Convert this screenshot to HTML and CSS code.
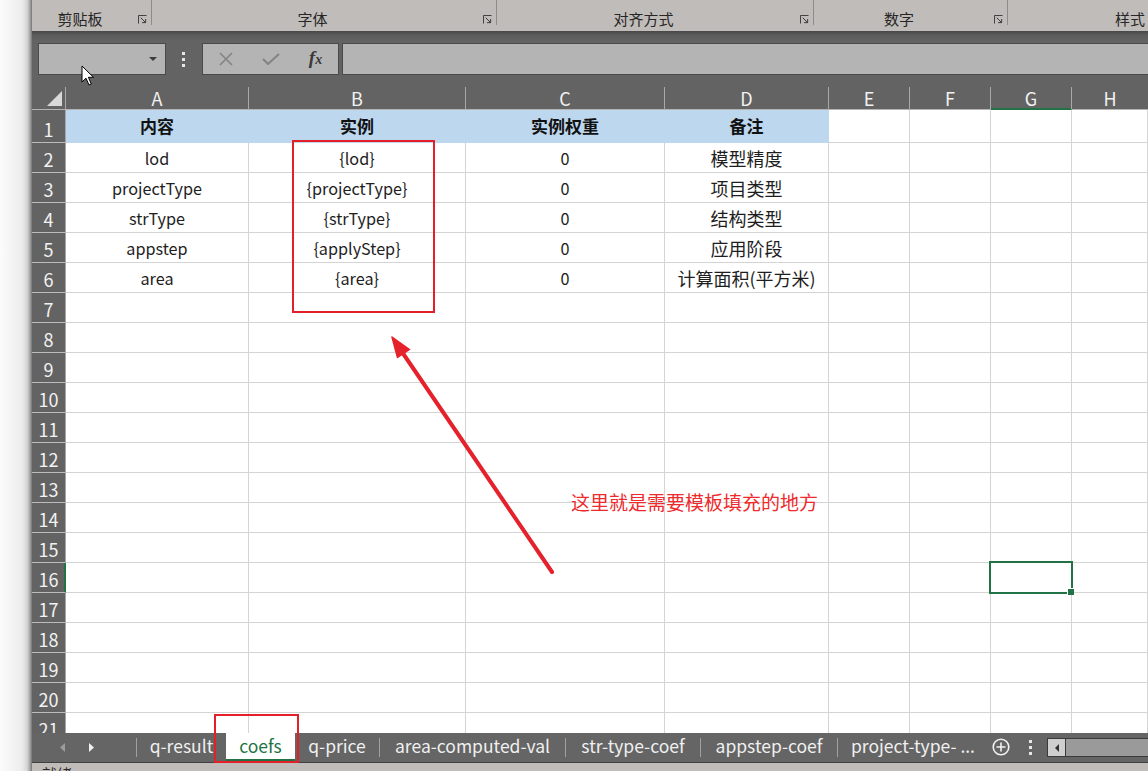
FILE: index.html
```html
<!DOCTYPE html>
<html lang="zh-CN">
<head>
<meta charset="utf-8">
<title>coefs</title>
<link rel="stylesheet" href="styles.css">
</head>
<body>
<div class="edge"></div>
<div class="app">
  <div class="ribbon">
    <div class="rg g1"><span class="rl">剪贴板</span><svg class="launch" viewBox="0 0 10 10"><path d="M0.5 9.5V0.5H9.5M3 3L8.5 8.5M8.5 4.5V8.5H4.5"/></svg></div>
    <i class="rsep"></i>
    <div class="rg g2"><span class="rl">字体</span><svg class="launch" viewBox="0 0 10 10"><path d="M0.5 9.5V0.5H9.5M3 3L8.5 8.5M8.5 4.5V8.5H4.5"/></svg></div>
    <i class="rsep"></i>
    <div class="rg g3"><span class="rl">对齐方式</span><svg class="launch" viewBox="0 0 10 10"><path d="M0.5 9.5V0.5H9.5M3 3L8.5 8.5M8.5 4.5V8.5H4.5"/></svg></div>
    <i class="rsep"></i>
    <div class="rg g4"><span class="rl">数字</span><svg class="launch" viewBox="0 0 10 10"><path d="M0.5 9.5V0.5H9.5M3 3L8.5 8.5M8.5 4.5V8.5H4.5"/></svg></div>
    <i class="rsep"></i>
    <div class="rg g5"><span class="rl rl-end">样式</span></div>
  </div>

  <div class="fbar">
    <div class="namebox"><svg class="dd" viewBox="0 0 8 4"><path d="M0 0H8L4 4Z"/></svg></div>
    <div class="vdots"><i></i><i></i><i></i></div>
    <div class="fxbox">
      <span class="fxslot"><svg class="ico-x" viewBox="0 0 14 14"><path d="M1 1L13 13M13 1L1 13"/></svg></span>
      <span class="fxslot"><svg class="ico-ok" viewBox="0 0 18 12"><path d="M1 6L6 11L17 1"/></svg></span>
      <span class="fxslot"><span class="fx">f<span class="fxs">x</span></span></span>
    </div>
    <div class="finput"></div>
  </div>

  <div class="sheet">
    <div class="r colhead">
      <div class="hc corner"><i class="tri"></i></div>
      <div class="hc">A</div><div class="hc">B</div><div class="hc">C</div><div class="hc">D</div>
      <div class="hc">E</div><div class="hc">F</div><div class="hc hsel">G</div><div class="hc last">H</div>
    </div>
    <div class="r r1">
      <div class="rh">1</div>
      <div class="c fill b">内容</div><div class="c fill b">实例</div><div class="c fill b">实例权重</div><div class="c fill b">备注</div>
      <div class="c"></div><div class="c"></div><div class="c"></div><div class="c"></div>
    </div>
    <div class="r">
      <div class="rh">2</div>
      <div class="c">lod</div><div class="c">{lod}</div><div class="c">0</div><div class="c zh">模型精度</div>
      <div class="c"></div><div class="c"></div><div class="c"></div><div class="c"></div>
    </div>
    <div class="r">
      <div class="rh">3</div>
      <div class="c">projectType</div><div class="c">{projectType}</div><div class="c">0</div><div class="c zh">项目类型</div>
      <div class="c"></div><div class="c"></div><div class="c"></div><div class="c"></div>
    </div>
    <div class="r">
      <div class="rh">4</div>
      <div class="c">strType</div><div class="c">{strType}</div><div class="c">0</div><div class="c zh">结构类型</div>
      <div class="c"></div><div class="c"></div><div class="c"></div><div class="c"></div>
    </div>
    <div class="r">
      <div class="rh">5</div>
      <div class="c">appstep</div><div class="c">{applyStep}</div><div class="c">0</div><div class="c zh">应用阶段</div>
      <div class="c"></div><div class="c"></div><div class="c"></div><div class="c"></div>
    </div>
    <div class="r">
      <div class="rh">6</div>
      <div class="c">area</div><div class="c">{area}</div><div class="c">0</div><div class="c zh">计算面积(平方米)</div>
      <div class="c"></div><div class="c"></div><div class="c"></div><div class="c"></div>
    </div>
    <div class="r"><div class="rh">7</div><div class="c"></div><div class="c"></div><div class="c"></div><div class="c"></div><div class="c"></div><div class="c"></div><div class="c"></div><div class="c"></div></div>
    <div class="r"><div class="rh">8</div><div class="c"></div><div class="c"></div><div class="c"></div><div class="c"></div><div class="c"></div><div class="c"></div><div class="c"></div><div class="c"></div></div>
    <div class="r"><div class="rh">9</div><div class="c"></div><div class="c"></div><div class="c"></div><div class="c"></div><div class="c"></div><div class="c"></div><div class="c"></div><div class="c"></div></div>
    <div class="r"><div class="rh">10</div><div class="c"></div><div class="c"></div><div class="c"></div><div class="c"></div><div class="c"></div><div class="c"></div><div class="c"></div><div class="c"></div></div>
    <div class="r"><div class="rh">11</div><div class="c"></div><div class="c"></div><div class="c"></div><div class="c"></div><div class="c"></div><div class="c"></div><div class="c"></div><div class="c"></div></div>
    <div class="r"><div class="rh">12</div><div class="c"></div><div class="c"></div><div class="c"></div><div class="c"></div><div class="c"></div><div class="c"></div><div class="c"></div><div class="c"></div></div>
    <div class="r"><div class="rh">13</div><div class="c"></div><div class="c"></div><div class="c"></div><div class="c"></div><div class="c"></div><div class="c"></div><div class="c"></div><div class="c"></div></div>
    <div class="r"><div class="rh">14</div><div class="c"></div><div class="c"></div><div class="c"></div><div class="c"></div><div class="c"></div><div class="c"></div><div class="c"></div><div class="c"></div></div>
    <div class="r"><div class="rh">15</div><div class="c"></div><div class="c"></div><div class="c"></div><div class="c"></div><div class="c"></div><div class="c"></div><div class="c"></div><div class="c"></div></div>
    <div class="r"><div class="rh rsel">16</div><div class="c"></div><div class="c"></div><div class="c"></div><div class="c"></div><div class="c"></div><div class="c"></div><div class="c"></div><div class="c"></div></div>
    <div class="r"><div class="rh">17</div><div class="c"></div><div class="c"></div><div class="c"></div><div class="c"></div><div class="c"></div><div class="c"></div><div class="c"></div><div class="c"></div></div>
    <div class="r"><div class="rh">18</div><div class="c"></div><div class="c"></div><div class="c"></div><div class="c"></div><div class="c"></div><div class="c"></div><div class="c"></div><div class="c"></div></div>
    <div class="r"><div class="rh">19</div><div class="c"></div><div class="c"></div><div class="c"></div><div class="c"></div><div class="c"></div><div class="c"></div><div class="c"></div><div class="c"></div></div>
    <div class="r"><div class="rh">20</div><div class="c"></div><div class="c"></div><div class="c"></div><div class="c"></div><div class="c"></div><div class="c"></div><div class="c"></div><div class="c"></div></div>
    <div class="r"><div class="rh">21</div><div class="c"></div><div class="c"></div><div class="c"></div><div class="c"></div><div class="c"></div><div class="c"></div><div class="c"></div><div class="c"></div></div>
  </div>

  <div class="tabbar">
    <div class="tabnav">
      <svg class="nav nav-prev" viewBox="0 0 5 9"><path d="M5 0V9L0 4.5Z"/></svg>
      <svg class="nav nav-next" viewBox="0 0 5 9"><path d="M0 0V9L5 4.5Z"/></svg>
    </div>
    <i class="tsep"></i>
    <div class="tab t1">q-result</div>
    <div class="tab active t2">coefs</div>
    <div class="tab t3">q-price</div>
    <i class="tsep"></i>
    <div class="tab t4">area-computed-val</div>
    <i class="tsep"></i>
    <div class="tab t5">str-type-coef</div>
    <i class="tsep"></i>
    <div class="tab t6">appstep-coef</div>
    <i class="tsep"></i>
    <div class="tab t7">project-type- ...</div>
    <svg class="addsheet" viewBox="0 0 18 18"><circle cx="9" cy="9" r="7.8"/><path d="M9 4.5V13.5M4.5 9H13.5"/></svg>
    <div class="tdots"><i></i><i></i><i></i></div>
    <div class="hscroll"><span class="hs-btn"><svg viewBox="0 0 4 8"><path d="M4 0V8L0 4Z"/></svg></span><span class="hs-thumb"></span></div>
  </div>
  <div class="status">就绪</div>
</div>

<!-- annotations over the screenshot -->
<div class="mark mark-b"></div>
<div class="mark mark-tab"></div>
<div class="selcell"><i class="handle"></i></div>
<div class="note">这里就是需要模板填充的地方</div>
<svg class="arrow" viewBox="0 0 1148 771">
  <line x1="552" y1="572" x2="400" y2="349"/>
  <polygon points="392,337 409.5,349.5 397.5,357.5"/>
</svg>
<svg class="cursor" viewBox="0 0 13 21"><path d="M1 1V17L5 13.2L8 20L10.3 19L7.4 12.3H12.5Z"/></svg>
</body>
</html>
```

FILE: styles.css
```css
* { box-sizing: border-box; margin: 0; padding: 0; }
html, body { width: 1148px; height: 771px; overflow: hidden; }
body {
  position: relative;
  display: flex;
  font-family: "Noto Sans CJK SC", "Noto Sans", sans-serif;
  background: #ffffff;
}
i { display: block; font-style: normal; }

.edge {
  flex: none;
  width: 32px;
  height: 771px;
  background: linear-gradient(to right, #fcfcfc 0, #ececec 22px, #d6d6d6 27px, #a5a5a5 30px, #747474 32px);
}
.app {
  flex: none;
  width: 1116px;
  height: 771px;
  display: flex;
  flex-direction: column;
  background: #636363;
}

/* ribbon group labels */
.ribbon {
  flex: none;
  height: 31px;
  display: flex;
  align-items: flex-start;
  background: #c0bcb9;
}
.rg { display: flex; align-items: flex-start; height: 31px; }
.g1 { width: 119px; }
.g2 { width: 344px; }
.g3 { width: 316px; }
.g4 { width: 193px; }
.g5 { flex: 1; }
.rl {
  flex: 1;
  margin-top: 9px;
  font-size: 15px;
  line-height: 20px;
  color: #262626;
  text-align: center;
}
.rl-end { text-align: right; padding-right: 3px; }
.launch {
  flex: none;
  width: 9px;
  height: 9px;
  margin: 15px 4px 0 10px;
  fill: none;
  stroke: #3a3a3a;
  stroke-width: 1.1;
}
.rsep { width: 1px; height: 25px; background: #8f8b88; }

/* formula bar */
.fbar {
  flex: none;
  height: 44px;
  padding: 12px 0 0 6px;
  display: flex;
  align-items: flex-start;
  background: linear-gradient(#474747 0, #5b5b5b 4px, #636363 10px);
}
.namebox {
  width: 128px;
  height: 32px;
  background: #b4b4b4;
  border: 1px solid #4a4a4a;
  display: flex;
  align-items: center;
  justify-content: flex-end;
  padding-right: 8px;
}
.dd { width: 8px; height: 4px; fill: #3c3c3c; }
.vdots {
  width: 34px;
  height: 32px;
  margin-right: 2px;
  display: flex;
  flex-direction: column;
  align-items: center;
  justify-content: center;
  gap: 3px;
}
.vdots i, .tdots i { width: 3px; height: 3px; background: #e6e6e6; }
.fxbox {
  width: 137px;
  height: 32px;
  margin-right: 3px;
  background: #b4b4b4;
  border: 1px solid #4a4a4a;
  display: flex;
}
.fxslot { width: 45px; height: 30px; display: flex; align-items: center; justify-content: center; }
.ico-x { width: 14px; height: 14px; fill: none; stroke: #838383; stroke-width: 1.6; }
.ico-ok { width: 18px; height: 12px; fill: none; stroke: #838383; stroke-width: 2; }
.fx {
  font-family: "Liberation Serif", serif;
  font-style: italic;
  font-weight: bold;
  font-size: 19px;
  color: #3a3a3a;
  line-height: 20px;
}
.fxs { font-size: 14px; }
.finput {
  flex: 1;
  height: 32px;
  background: #b4b4b4;
  border: 1px solid #4a4a4a;
  border-right: none;
}

/* sheet grid */
.sheet {
  flex: none;
  height: 658px;
  overflow: hidden;
  background: #ffffff;
}
.r {
  display: grid;
  grid-template-columns: 34px 183px 217px 199px 164px 81px 81px 81px 1fr;
}
.colhead { height: 35px; padding-top: 12px; background: #636363; }
.hc {
  height: 23px;
  border-right: 1px solid #a8a8a8;
  border-bottom: 1px solid #b4b4b4;
  color: #f2f2f2;
  font-size: 18px;
  line-height: 22px;
  display: flex;
  justify-content: center;
  align-items: center;
}
.hc.last { border-right: none; }
.hsel { border-bottom-color: #217346; box-shadow: inset 0 -1px 0 #217346; }
.corner { position: relative; justify-content: flex-end; align-items: flex-end; padding: 0 3px 3px 0; }
.tri {
  width: 0;
  height: 0;
  border-style: solid;
  border-width: 0 0 15px 15px;
  border-color: transparent transparent #d9d9d9 transparent;
}
.rh, .c {
  height: 30px;
  border-bottom: 1px solid #d4d4d4;
  border-right: 1px solid #d4d4d4;
  display: flex;
  justify-content: center;
  align-items: flex-end;
  padding-bottom: 3px;
  line-height: 22px;
  white-space: nowrap;
  overflow: hidden;
}
.rh {
  background: #636363;
  color: #f2f2f2;
  font-size: 18px;
  border-right-color: #a6a6a6;
  border-bottom-color: #bcbcbc;
  padding-bottom: 2px;
}
.rsel { border-right-color: #217346; box-shadow: inset -1px 0 0 #217346; }
.c { font-size: 16.2px; color: #1e1e1e; }
.c.zh { font-size: 18px; }
.r1 .rh, .r1 .c { height: 33px; }
.r1 .c { align-items: center; padding-bottom: 0; font-size: 17px; }
.fill { background: #bdd7ee; border-color: #bdd7ee; }
.b { font-weight: bold; color: #111; }

/* sheet tabs */
.tabbar {
  flex: none;
  height: 30px;
  display: flex;
  align-items: flex-start;
  background: #656565;
  border-bottom: 1px solid #404040;
}
.tabnav {
  width: 104px;
  height: 29px;
  display: flex;
  align-items: center;
  padding-left: 28px;
  gap: 24px;
}
.nav { width: 5px; height: 9px; }
.nav-prev { fill: #9c9c9c; }
.nav-next { fill: #f0f0f0; }
.tsep { width: 1px; height: 19px; margin-top: 5px; background: #a0a0a0; }
.tab {
  height: 29px;
  font-size: 17.5px;
  line-height: 26px;
  color: #f0f0f0;
  text-align: center;
  white-space: nowrap;
}
.t1 { width: 89px; }
.t2 { width: 69px; }
.t3 { width: 84px; }
.t4 { width: 185px; }
.t5 { width: 134px; }
.t6 { width: 136px; }
.t7 { width: 152px; text-align: left; padding-left: 13px; }
.tab.active {
  height: 28px;
  background: #ffffff;
  color: #217346;
  border-bottom: 2px solid #217346;
  line-height: 25px;
}
.addsheet {
  width: 18px;
  height: 18px;
  margin: 5px 0 0 2px;
  fill: none;
  stroke: #f2f2f2;
  stroke-width: 1.6;
}
.tdots {
  width: 20px;
  height: 29px;
  margin-left: 10px;
  display: flex;
  flex-direction: column;
  align-items: center;
  justify-content: center;
  gap: 3px;
}
.hscroll {
  flex: 1;
  height: 19px;
  margin: 5px 0 0 7px;
  border: 1px solid #3a3a3a;
  border-right: none;
  display: flex;
}
.hs-btn {
  width: 18px;
  background: #cfcfcf;
  border-right: 1px solid #3a3a3a;
  display: flex;
  align-items: center;
  justify-content: center;
}
.hs-btn svg { width: 4px; height: 8px; fill: #333; }
.hs-thumb { flex: 1; background: #9a9a9a; }

.status {
  flex: none;
  height: 8px;
  overflow: hidden;
  background: #c0bcb9;
  padding: 1px 0 0 10px;
  font-size: 15px;
  line-height: 20px;
  color: #2a2a2a;
}

/* overlays */
.mark { position: absolute; border: 2px solid #e3202a; }
.mark-b { left: 292px; top: 140px; width: 143px; height: 173px; }
.mark-tab { left: 214px; top: 714px; width: 85px; height: 49px; }
.selcell {
  position: absolute;
  left: 989px;
  top: 561px;
  width: 84px;
  height: 33px;
  border: 2px solid #217346;
}
.handle {
  position: absolute;
  right: -3px;
  bottom: -3px;
  width: 7px;
  height: 7px;
  background: #217346;
  border-left: 1px solid #fff;
  border-top: 1px solid #fff;
}
.note {
  position: absolute;
  left: 571px;
  top: 490px;
  font-size: 19px;
  line-height: 24px;
  color: #ee2a2d;
  white-space: nowrap;
}
.arrow {
  position: absolute;
  left: 0;
  top: 0;
  width: 1148px;
  height: 771px;
  pointer-events: none;
}
.arrow line { stroke: #e5222b; stroke-width: 4; stroke-linecap: round; }
.arrow polygon { fill: #e5222b; stroke: #e5222b; stroke-width: 1.5; stroke-linejoin: round; }
.cursor {
  position: absolute;
  left: 81px;
  top: 65px;
  width: 13px;
  height: 21px;
  fill: #ffffff;
  stroke: #000000;
  stroke-width: 1;
  stroke-linejoin: round;
}
```
